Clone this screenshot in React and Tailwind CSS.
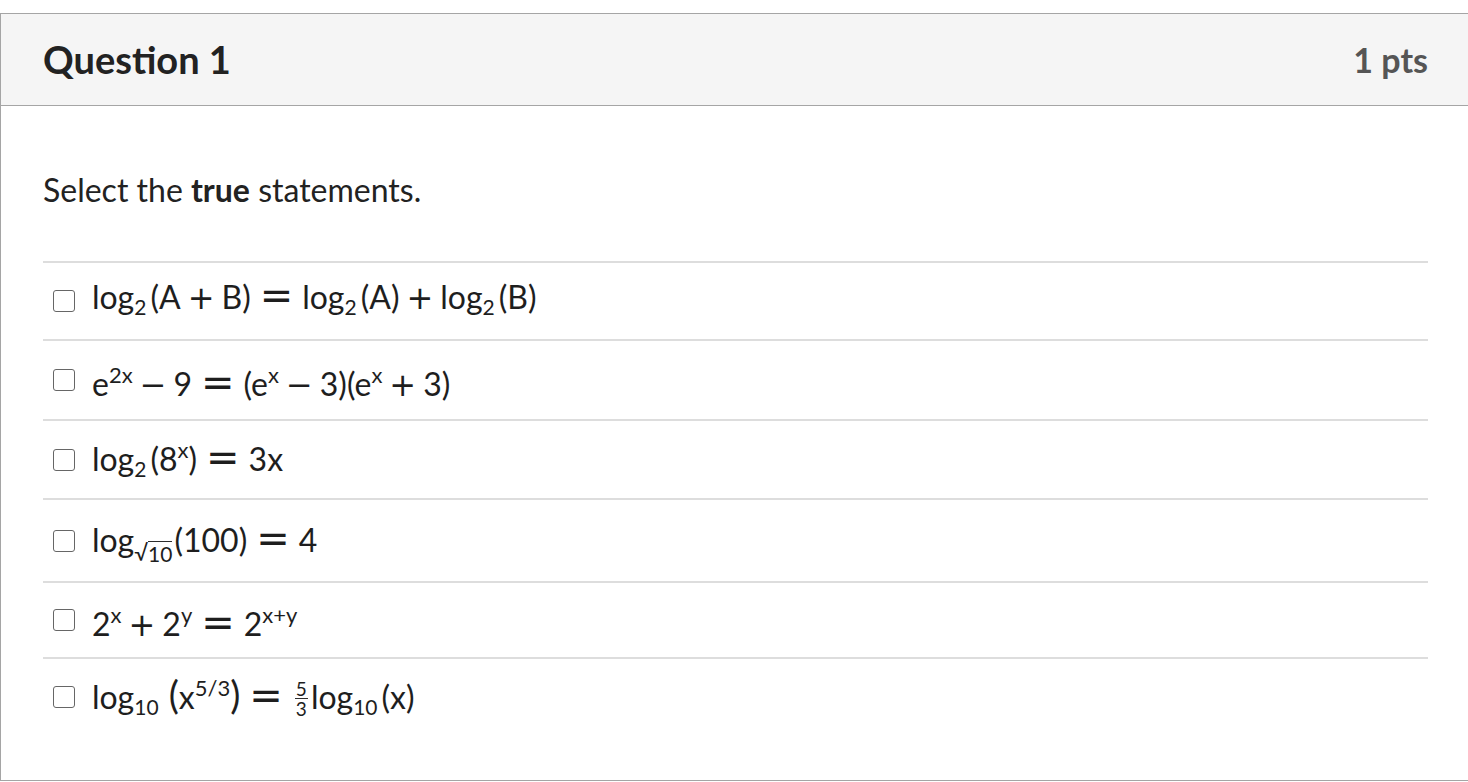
import React from 'react';

const Sub = ({ children }) => (
  <span className="text-[21px] align-[-6px] mr-[4px]">{children}</span>
);

const Sup = ({ children }) => (
  <span className="text-[22px] align-[13px]">{children}</span>
);

// binary operators and relations get the wide math glyphs
const Op = ({ children }) => (
  <span className="mx-[7px] text-[32px] font-['DejaVu_Sans',sans-serif]">{children}</span>
);
const Rel = ({ children }) => (
  <span className="mx-[9px] text-[40px] leading-none font-['DejaVu_Sans',sans-serif]">{children}</span>
);

const Checkbox = () => (
  <span className="inline-block shrink-0 w-[22px] h-[22px] border-[1.5px] border-[#666] rounded-[3px] bg-white" />
);

const options = [
  {
    id: 1,
    math: (
      <>
        log<Sub>2</Sub>(A<Op>+</Op>B)<Rel>=</Rel>log<Sub>2</Sub>(A)<Op>+</Op>log<Sub>2</Sub>(B)
      </>
    ),
    h: 'h-[78px]',
  },
  {
    id: 2,
    math: (
      <>
        e<Sup>2x</Sup>
        <Op>−</Op>9<Rel>=</Rel>(e<Sup>x</Sup>
        <Op>−</Op>3)(e<Sup>x</Sup>
        <Op>+</Op>3)
      </>
    ),
    h: 'h-[80px]',
  },
  {
    id: 3,
    math: (
      <>
        log<Sub>2</Sub>(8<Sup>x</Sup>)<Rel>=</Rel>3x
      </>
    ),
    h: 'h-[79px]',
  },
  {
    id: 4,
    math: (
      <>
        log
        <span className="text-[21px] align-[-9px] inline-flex items-end mr-[2px]">
          <span className="text-[22px] leading-none">√</span>
          <span className="border-t-[1.5px] border-[#2d2d2d] leading-none pt-[1px]">10</span>
        </span>
        (100)<Rel>=</Rel>4
      </>
    ),
    h: 'h-[83px]',
  },
  {
    id: 5,
    math: (
      <>
        2<Sup>x</Sup>
        <Op>+</Op>2<Sup>y</Sup>
        <Rel>=</Rel>2<Sup>x+y</Sup>
      </>
    ),
    h: 'h-[76px]',
  },
  {
    id: 6,
    math: (
      <>
        log<Sub>10</Sub>
        <span className="ml-[6px] text-[38px] leading-none">(</span>x<Sup>5/3</Sup>
        <span className="text-[38px] leading-none">)</span>
        <Rel>=</Rel>
        <span className="inline-flex flex-col items-center align-[13px] text-[19px] leading-[19px] mx-[3px]">
          <span>5</span>
          <span className="border-t-[1.5px] border-[#2d2d2d] w-[13px]" />
          <span>3</span>
        </span>
        log<Sub>10</Sub>(x)
      </>
    ),
    h: 'h-[78px]',
  },
];

export default function App() {
  return (
    <div className="min-h-screen bg-white pt-[13px]" style={{ fontFamily: 'Lato, "Noto Sans", sans-serif' }}>
      <div className="border-t border-l border-b border-[#a5a5a5]">
        <div className="h-[92px] bg-[#f5f5f5] border-b border-[#a5a5a5] flex items-center justify-between pl-[42px] pr-[40px]">
          <h2 className="text-[38px] font-bold text-[#222]">Question 1</h2>
          <span className="text-[34px] font-bold text-[#555]">1 pts</span>
        </div>
        <div className="pl-[42px] pr-[40px] pt-[64px] pb-[45px] text-[#222]">
          <p className="text-[32px] leading-[40px] mb-[51px]">
            Select the <strong className="font-bold">true</strong> statements.
          </p>
          <div>
            {options.map((o) => (
              <div
                key={o.id}
                className={`border-t-2 border-[#dddddd] ${o.h} flex items-center pl-[10px]`}
              >
                <Checkbox />
                <span className="ml-[17px] text-[32px] leading-[40px] text-[#1e1e1e] whitespace-nowrap">{o.math}</span>
              </div>
            ))}
          </div>
        </div>
      </div>
    </div>
  );
}
